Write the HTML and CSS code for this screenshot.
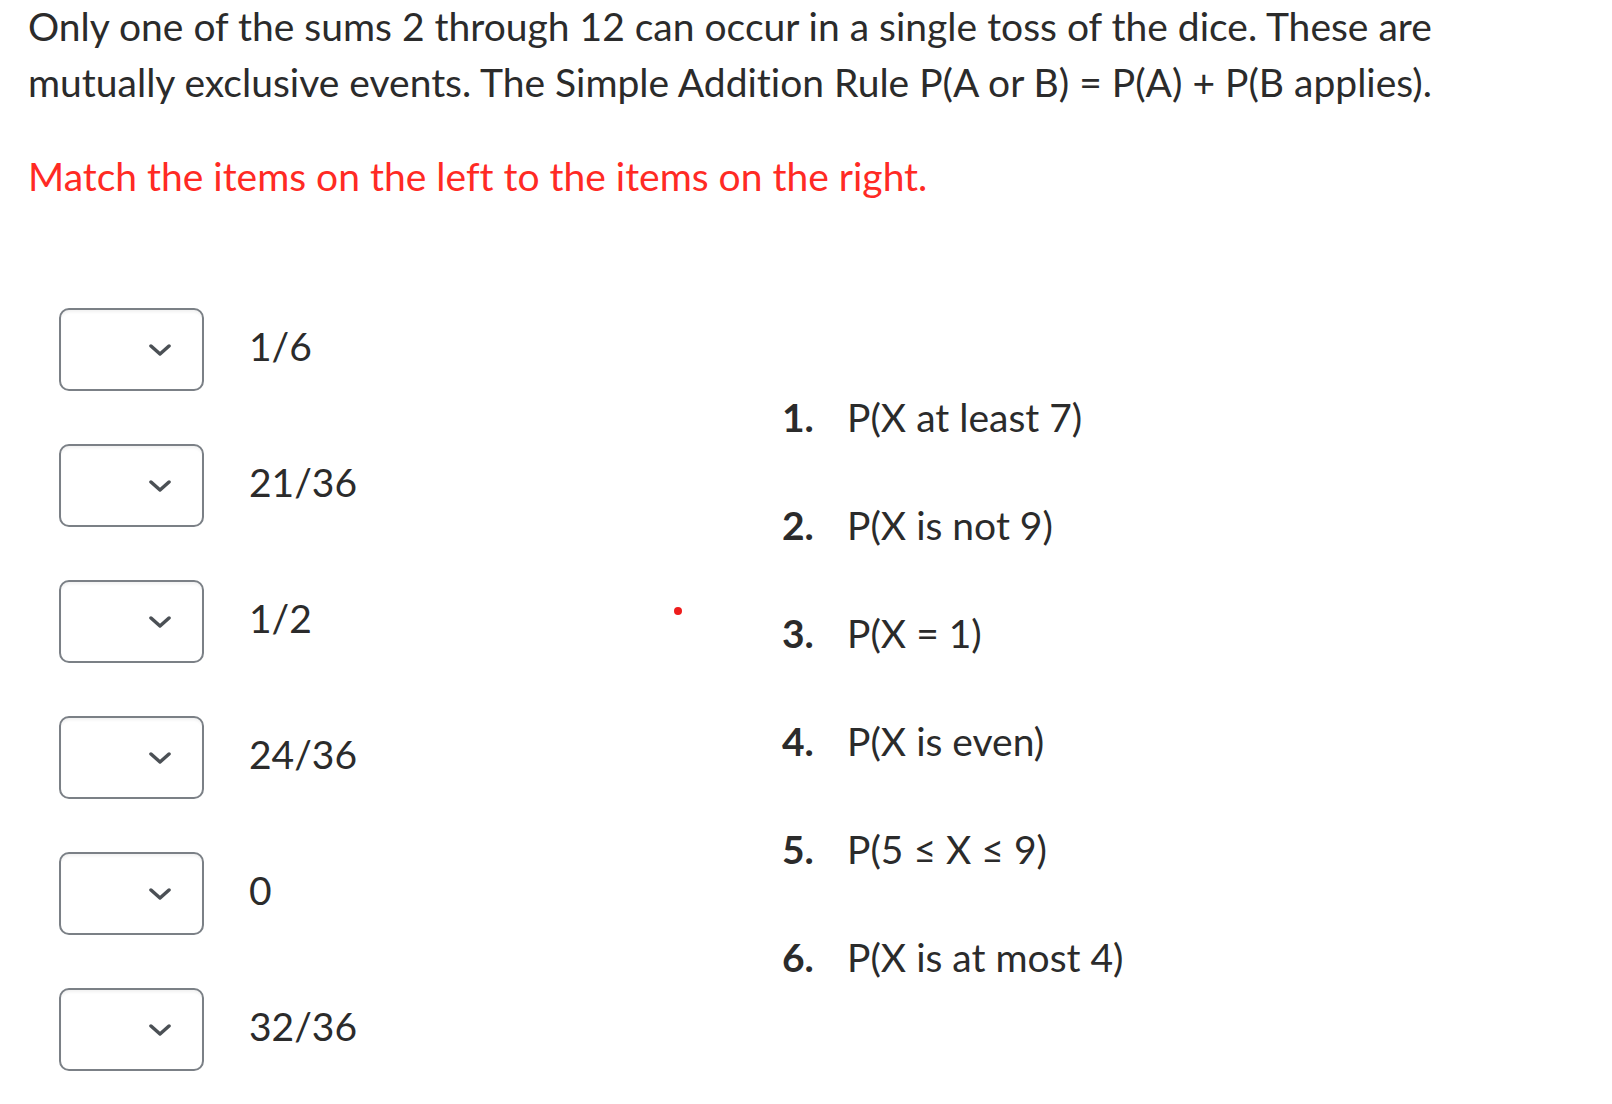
FILE: index.html
```html
<!DOCTYPE html>
<html lang="en">
<head>
    <meta charset="UTF-8">
    <meta name="viewport" content="width=device-width, initial-scale=1.0">
    <title>Matching question</title>
    <link rel="stylesheet" href="styles.css">
</head>
<body>
    <div class="question">
        <p class="question-text">Only one of the sums 2 through 12 can occur in a single toss of the dice. These are mutually exclusive events. The Simple Addition Rule P(A or B) = P(A) + P(B applies).</p>
        <p class="instructions">Match the items on the left to the items on the right.</p>

        <div class="matching">
            <div class="answers">
                <div class="answer-row">
                    <div class="select-wrap">
                        <select aria-label="Match for 1/6"><option></option><option>1</option><option>2</option><option>3</option><option>4</option><option>5</option><option>6</option></select>
                        <svg class="chevron" width="22" height="12" viewBox="0 0 22 12"><path d="M2 2 L11 10 L20 2" fill="none" stroke="#4b5055" stroke-width="3.5" stroke-linecap="round" stroke-linejoin="round"/></svg>
                    </div>
                    <span class="answer-text">1/6</span>
                </div>
                <div class="answer-row">
                    <div class="select-wrap">
                        <select aria-label="Match for 21/36"><option></option><option>1</option><option>2</option><option>3</option><option>4</option><option>5</option><option>6</option></select>
                        <svg class="chevron" width="22" height="12" viewBox="0 0 22 12"><path d="M2 2 L11 10 L20 2" fill="none" stroke="#4b5055" stroke-width="3.5" stroke-linecap="round" stroke-linejoin="round"/></svg>
                    </div>
                    <span class="answer-text">21/36</span>
                </div>
                <div class="answer-row">
                    <div class="select-wrap">
                        <select aria-label="Match for 1/2"><option></option><option>1</option><option>2</option><option>3</option><option>4</option><option>5</option><option>6</option></select>
                        <svg class="chevron" width="22" height="12" viewBox="0 0 22 12"><path d="M2 2 L11 10 L20 2" fill="none" stroke="#4b5055" stroke-width="3.5" stroke-linecap="round" stroke-linejoin="round"/></svg>
                    </div>
                    <span class="answer-text">1/2</span>
                </div>
                <div class="answer-row">
                    <div class="select-wrap">
                        <select aria-label="Match for 24/36"><option></option><option>1</option><option>2</option><option>3</option><option>4</option><option>5</option><option>6</option></select>
                        <svg class="chevron" width="22" height="12" viewBox="0 0 22 12"><path d="M2 2 L11 10 L20 2" fill="none" stroke="#4b5055" stroke-width="3.5" stroke-linecap="round" stroke-linejoin="round"/></svg>
                    </div>
                    <span class="answer-text">24/36</span>
                </div>
                <div class="answer-row">
                    <div class="select-wrap">
                        <select aria-label="Match for 0"><option></option><option>1</option><option>2</option><option>3</option><option>4</option><option>5</option><option>6</option></select>
                        <svg class="chevron" width="22" height="12" viewBox="0 0 22 12"><path d="M2 2 L11 10 L20 2" fill="none" stroke="#4b5055" stroke-width="3.5" stroke-linecap="round" stroke-linejoin="round"/></svg>
                    </div>
                    <span class="answer-text">0</span>
                </div>
                <div class="answer-row">
                    <div class="select-wrap">
                        <select aria-label="Match for 32/36"><option></option><option>1</option><option>2</option><option>3</option><option>4</option><option>5</option><option>6</option></select>
                        <svg class="chevron" width="22" height="12" viewBox="0 0 22 12"><path d="M2 2 L11 10 L20 2" fill="none" stroke="#4b5055" stroke-width="3.5" stroke-linecap="round" stroke-linejoin="round"/></svg>
                    </div>
                    <span class="answer-text">32/36</span>
                </div>
            </div>

            <span class="marker-dot"></span>

            <ol class="choices">
                <li><span class="num">1.</span>P(X at least 7)</li>
                <li><span class="num">2.</span>P(X is not 9)</li>
                <li><span class="num">3.</span>P(X = 1)</li>
                <li><span class="num">4.</span>P(X is even)</li>
                <li><span class="num">5.</span>P(5 ≤ X ≤ 9)</li>
                <li><span class="num">6.</span>P(X is at most 4)</li>
            </ol>
        </div>
    </div>
</body>
</html>
```

FILE: styles.css
```css
body {
    margin: 0;
    background: #fff;
    color: #2b2b2b;
    font-family: 'Lato', 'Open Sans', sans-serif;
    font-size: 39px;
    line-height: 56px;
    font-variant-ligatures: none;
}
.question {
    padding: 0 28px;
}
.question-text {
    max-width: 1460px;
    margin: -2px 0 0;
}
.instructions {
    color: #ff2a24;
    margin: 38px 0 0;
}
/* zona s dropdowny a moznostmi */
.matching {
    position: relative;
    display: flex;
    align-items: center;
    margin-top: 104px;
    padding-left: 31px;
}
.answers {
    width: 723px;
    display: flex;
    flex-direction: column;
    gap: 53px;
}
.answer-row {
    display: flex;
    align-items: center;
    height: 83px;
}
.select-wrap {
    position: relative;
    width: 145px;
    height: 83px;
}
.select-wrap select {
    appearance: none;
    -webkit-appearance: none;
    width: 100%;
    height: 100%;
    margin: 0;
    border: 2px solid #7b8086;
    border-radius: 10px;
    background: #fff;
    box-shadow: inset 0 3px 3px -1px rgba(0, 0, 0, 0.06);
    font: inherit;
    outline: none;
}
.chevron {
    position: absolute;
    right: 33px;
    top: 36px;
    pointer-events: none;
}
.answer-text {
    margin-left: 45px;
    margin-bottom: 7px;
}
.choices {
    list-style: none;
    margin: 0 0 6px;
    padding: 0;
    display: flex;
    flex-direction: column;
    gap: 52px;
}
.num {
    display: inline-block;
    width: 65px;
    font-weight: bold;
}
.marker-dot {
    position: absolute;
    left: 646px;
    top: 299px;
    width: 8px;
    height: 8px;
    border-radius: 50%;
    background: #ee1c1c;
}
```
